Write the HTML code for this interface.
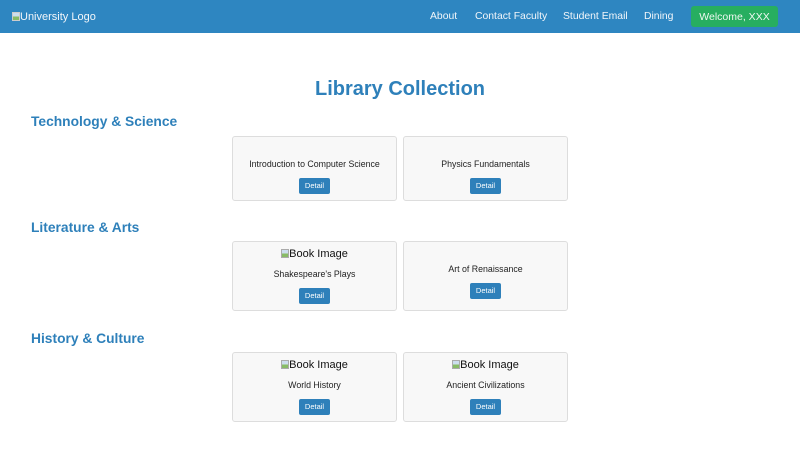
<!DOCTYPE html>
<html><head><meta charset="utf-8"><style>
*{margin:0;padding:0;box-sizing:border-box}
body{width:800px;height:450px;background:#fff;font-family:"Liberation Sans",Arial,sans-serif;position:relative;overflow:hidden}
.nav{position:absolute;left:0;top:0;width:800px;height:33px;background:#2e86c1}
.nav span{position:absolute;top:11px;color:#f2f6fa;font-size:10.4px}
.welcome{position:absolute;left:691px;top:6px;width:87px;height:21px;background:#27ae60;border-radius:3px;color:#eef8f0;font-size:10.5px;text-align:center;line-height:22px}
h1{position:absolute;top:78px;left:0;width:800px;text-align:center;font-size:20px;color:#2e80ba;font-weight:bold}
h2{position:absolute;left:31px;font-size:13.8px;color:#2e80ba;font-weight:bold}
.card{position:absolute;width:165px;background:#f8f8f8;border:1px solid #ddd;border-radius:3px;text-align:center}
.t{position:absolute;left:0;width:100%;font-size:8.8px;color:#222}
.b{position:absolute;left:66px;width:31px;height:16px;background:#2e80ba;color:#fff;font-size:7.5px;line-height:16px;border-radius:2px}
.img{position:absolute;left:0;width:100%;font-size:11px;color:#111}
.img i{display:inline-block;width:8px;height:9px;border:1px solid #aaa;background:linear-gradient(#cde 50%,#8b6 50%);vertical-align:-1px}
</style></head><body>
<div class="nav">
<span style="left:12px;font-size:11px;top:11px"><i style="display:inline-block;width:8px;height:9px;border:1px solid #ccc;background:linear-gradient(#cde 50%,#8b6 50%);vertical-align:-1px"></i>University Logo</span>
<span style="left:430px">About</span>
<span style="left:475px">Contact Faculty</span>
<span style="left:563px">Student Email</span>
<span style="left:644px">Dining</span>
<div class="welcome">Welcome, XXX</div>
</div>
<h1>Library Collection</h1>
<h2 style="top:114px">Technology &amp; Science</h2>
<div class="card" style="left:232px;top:136px;height:65px"><div class="t" style="top:22px">Introduction to Computer Science</div><div class="b" style="top:41px">Detail</div></div>
<div class="card" style="left:403px;top:136px;height:65px"><div class="t" style="top:22px">Physics Fundamentals</div><div class="b" style="top:41px">Detail</div></div>
<h2 style="top:220px">Literature &amp; Arts</h2>
<div class="card" style="left:232px;top:241px;height:70px"><div class="img" style="top:6px"><i></i>Book Image</div><div class="t" style="top:27px">Shakespeare's Plays</div><div class="b" style="top:46px">Detail</div></div>
<div class="card" style="left:403px;top:241px;height:70px"><div class="t" style="top:22px">Art of Renaissance</div><div class="b" style="top:41px">Detail</div></div>
<h2 style="top:331px">History &amp; Culture</h2>
<div class="card" style="left:232px;top:352px;height:70px"><div class="img" style="top:6px"><i></i>Book Image</div><div class="t" style="top:27px">World History</div><div class="b" style="top:46px">Detail</div></div>
<div class="card" style="left:403px;top:352px;height:70px"><div class="img" style="top:6px"><i></i>Book Image</div><div class="t" style="top:27px">Ancient Civilizations</div><div class="b" style="top:46px">Detail</div></div>
</body></html>
